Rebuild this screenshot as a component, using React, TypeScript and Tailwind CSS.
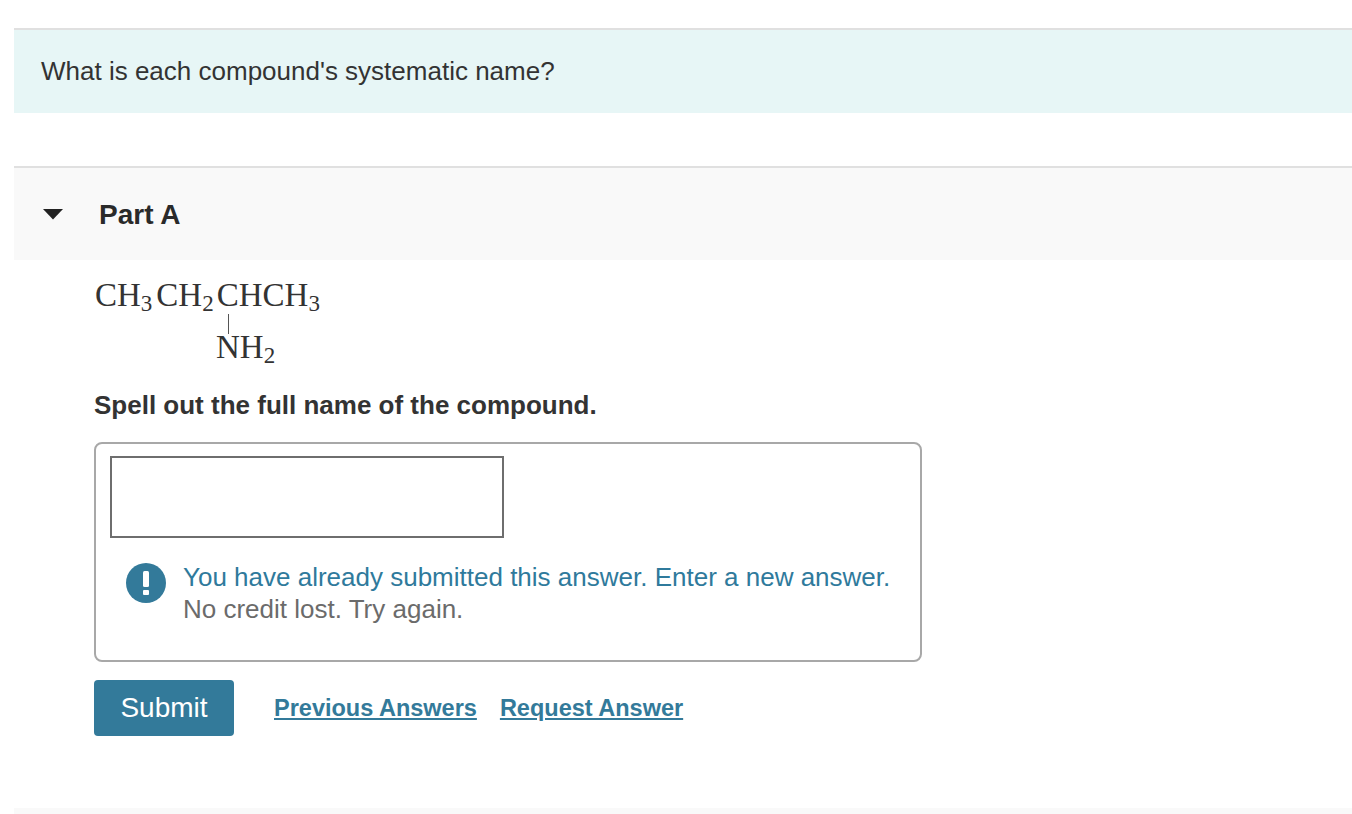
export default function App() {
  const sans = "font-['Liberation_Sans',Arial,sans-serif]";
  const serif = "font-['Liberation_Serif','Times_New_Roman',serif]";
  return (
    <div className={`w-[1352px] h-[814px] overflow-hidden bg-white pl-[14px] pt-[28px] text-[#333333] ${sans}`}>
      <div className="h-[85px] border-t-2 border-[#e0e0e0] bg-[#e7f6f6] pl-[27px] pt-[25px] text-[26px] leading-[32px]">
        What is each compound's systematic name?
      </div>
      <div className="mt-[53px] flex h-[94px] items-center border-t-2 border-[#e0e0e0] bg-[#f9f9f9]">
        <svg width="22" height="12" viewBox="0 0 22 12" className="ml-[28px] mt-[-1px]">
          <path d="M1 1 H21 L11 11.5 Z" fill="#222222" />
        </svg>
        <span className="ml-[35px] mt-[2px] text-[28px] font-bold leading-[32px] text-[#2a2a2a]">Part A</span>
      </div>
      <div className="pl-[81px]">
        <div className={`mt-[16px] flex h-[38px] items-start text-[33px] leading-[38px] text-[#333333] ${serif}`}>
          <span>CH<sub className="text-[23px] leading-none align-[1px]">3</sub></span>
          <span className="ml-[4px]">CH<sub className="text-[23px] leading-none align-[1px]">2</sub></span>
          <span className="ml-[3px]">CHCH<sub className="text-[23px] leading-none align-[1px]">3</sub></span>
        </div>
        <div className="ml-[133px] h-[20px] w-px bg-[#555555]" />
        <div className={`ml-[121px] h-[36px] text-[33px] leading-[26px] text-[#333333] ${serif}`}>
          NH<sub className="text-[23px] leading-none align-[1px]">2</sub>
        </div>
      </div>
      <div className="pl-[80px]">
        <div className="mt-[19px] text-[26px] font-bold leading-[32px] text-[#333333]">
          Spell out the full name of the compound.
        </div>
        <div className="mt-[21px] h-[220px] w-[828px] rounded-[8px] border-2 border-[#a8a8a8] px-[14px] pt-[12px]">
          <div className="h-[82px] w-[394px] border-2 border-[#6e6e6e] bg-white" />
          <div className="mt-[24px] flex items-start">
            <svg width="40" height="40" viewBox="0 0 40 40" className="ml-[16px] mt-[1px] shrink-0">
              <circle cx="20" cy="20" r="20" fill="#337a9a" />
              <rect x="17" y="8" width="6" height="16" rx="1.5" fill="#ffffff" />
              <rect x="17" y="27" width="6" height="5" rx="1" fill="#ffffff" />
            </svg>
            <div className="ml-[17px] mt-[-1px] text-[26px] leading-[32px]">
              <div className="text-[#2f7a9c]">You have already submitted this answer. Enter a new answer.</div>
              <div className="text-[#6b6b6b]">No credit lost. Try again.</div>
            </div>
          </div>
        </div>
        <div className="mt-[18px] flex items-center">
          <button className="h-[56px] w-[140px] rounded-[4px] bg-[#337a9a] text-[28px] text-white">Submit</button>
          <a href="#" className="ml-[40px] mt-[2px] text-[23.5px] font-bold text-[#337a9a] underline">Previous Answers</a>
          <a href="#" className="ml-[23px] mt-[2px] text-[23.5px] font-bold text-[#337a9a] underline">Request Answer</a>
        </div>
      </div>
      <div className="mt-[72px] h-[6px] bg-[#f9f9f9]" />
    </div>
  );
}
